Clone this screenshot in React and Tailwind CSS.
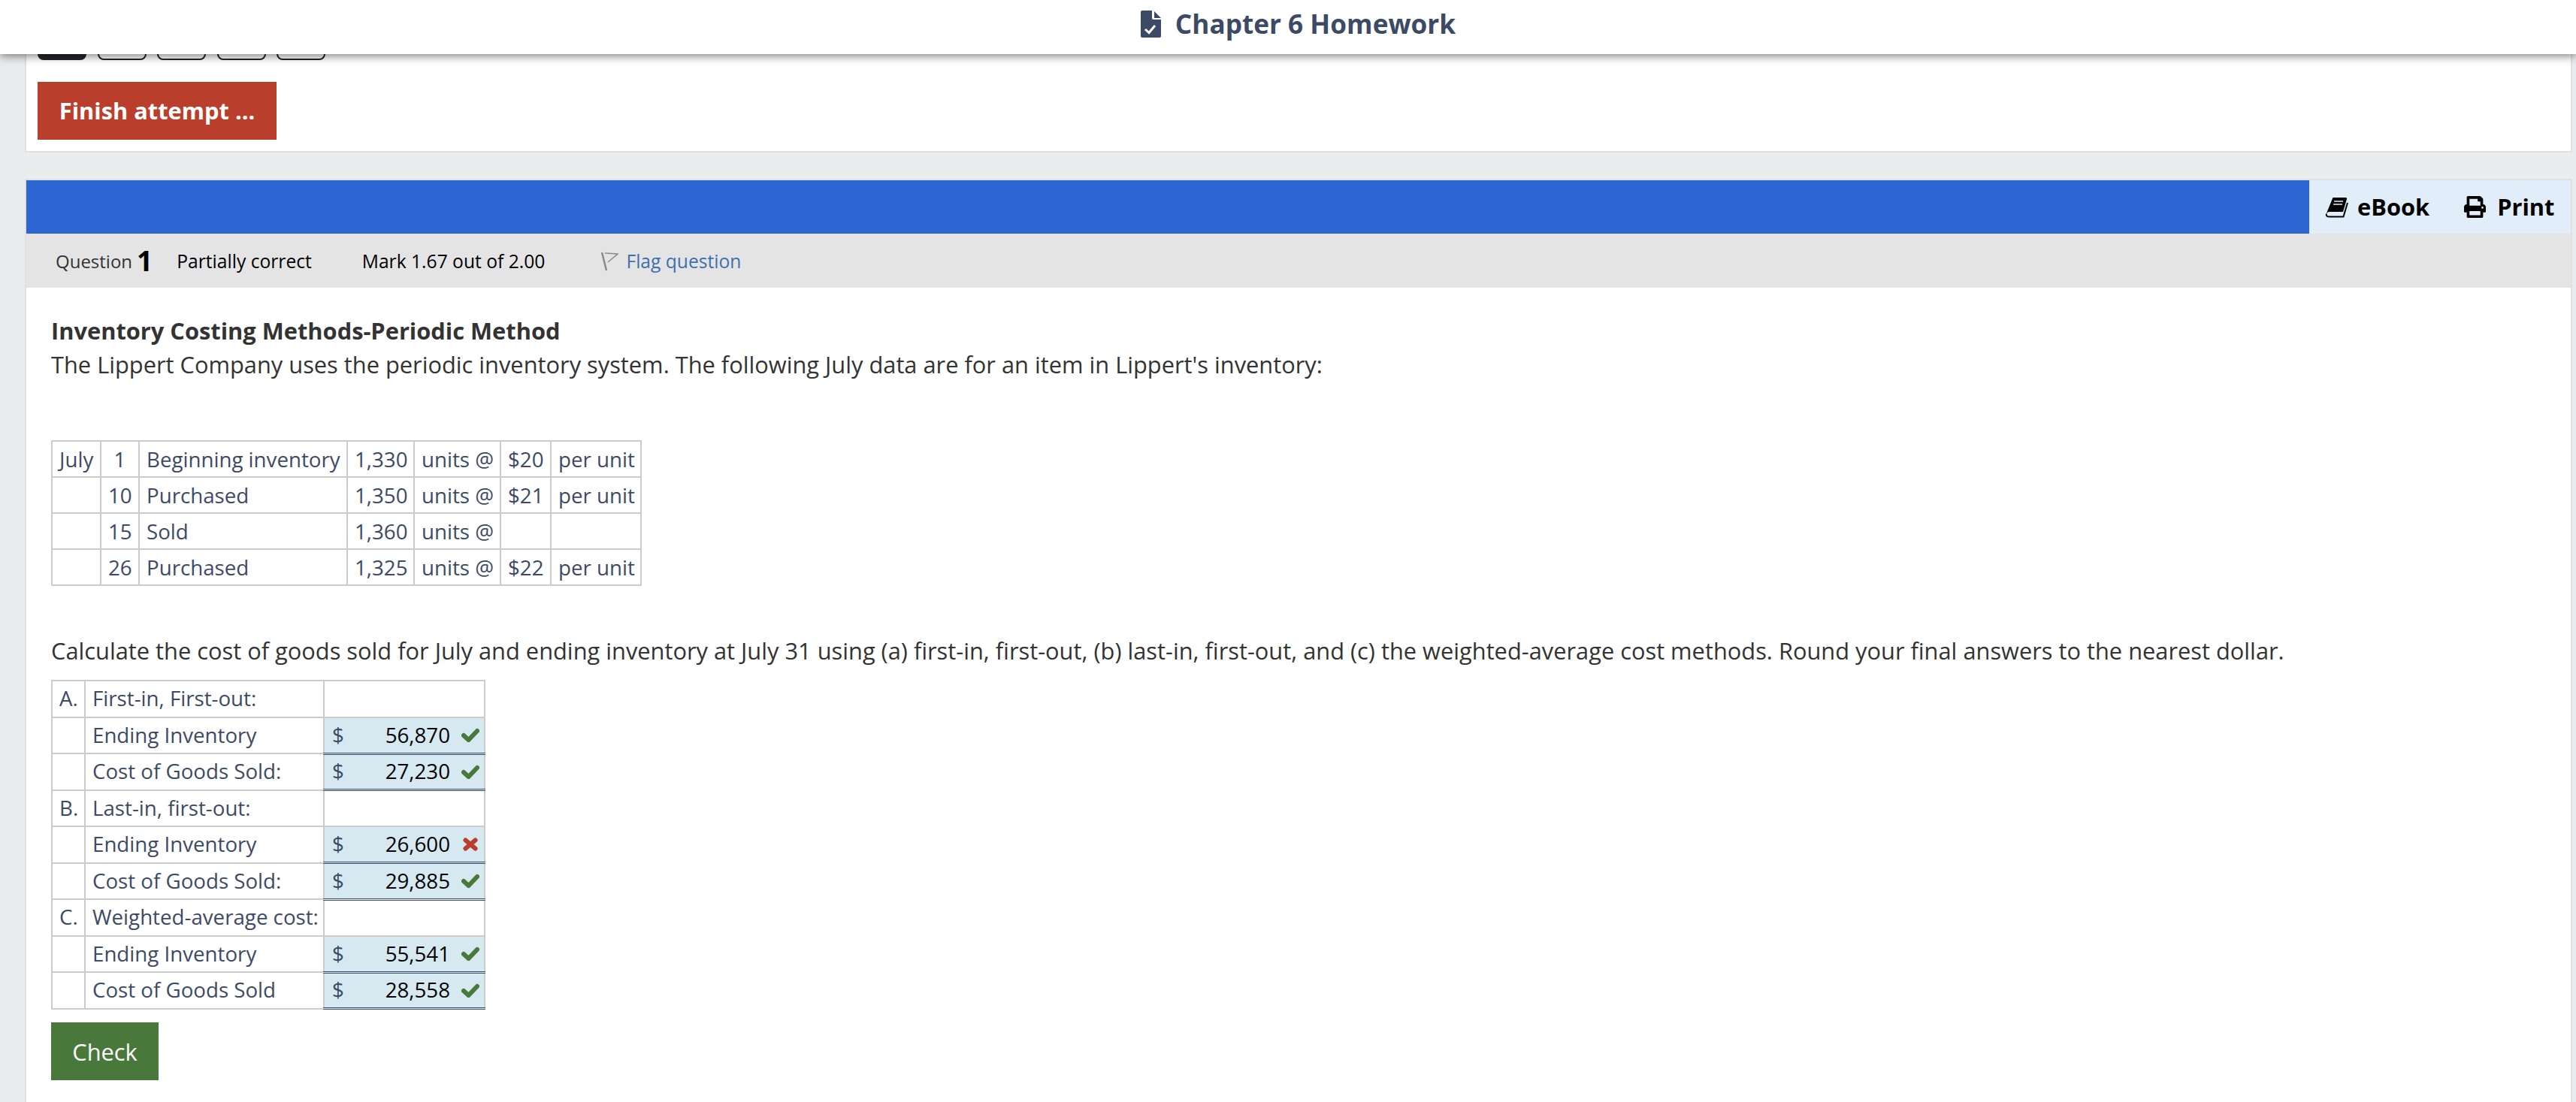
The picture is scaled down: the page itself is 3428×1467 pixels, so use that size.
import React from 'react';
import { FaPrint } from 'react-icons/fa';

const inventoryRows = [
  { month: 'July', day: '1', label: 'Beginning inventory', qty: '1,330', price: '$20', per: 'per unit' },
  { month: '', day: '10', label: 'Purchased', qty: '1,350', price: '$21', per: 'per unit' },
  { month: '', day: '15', label: 'Sold', qty: '1,360', price: '', per: '' },
  { month: '', day: '26', label: 'Purchased', qty: '1,325', price: '$22', per: 'per unit' },
];

const answerRows = [
  { key: 'A.', label: 'First-in, First-out:' },
  { label: 'Ending Inventory', value: '56,870', ok: true },
  { label: 'Cost of Goods Sold:', value: '27,230', ok: true },
  { key: 'B.', label: 'Last-in, first-out:' },
  { label: 'Ending Inventory', value: '26,600', ok: false },
  { label: 'Cost of Goods Sold:', value: '29,885', ok: true },
  { key: 'C.', label: 'Weighted-average cost:' },
  { label: 'Ending Inventory', value: '55,541', ok: true },
  { label: 'Cost of Goods Sold', value: '28,558', ok: true },
];

const FileCheckIcon = () => (
  <svg width="27" height="36" viewBox="0 0 27 36" className="shrink-0">
    <path d="M2 0H15V10a2 2 0 0 0 2 2H27V34a2 2 0 0 1-2 2H2a2 2 0 0 1-2-2V2a2 2 0 0 1 2-2z" fill="#3d4a66" />
    <path d="M18 1L27 10H18z" fill="#3d4a66" />
    <path d="M6 25L11 29.500L19 20" fill="none" stroke="#fff" strokeWidth="3" />
  </svg>
);

const BookIcon = () => (
  <svg width="32" height="28" viewBox="4 6 32 28" className="shrink-0">
    <path d="M14.500 7H31.500a1.500 1.500 0 0 1 1.500 2L28 26H10c-2 0-3.500 1-4.500 3z" fill="#000" />
    <path d="M6 28.500c-1 2.500.5 4 3 4H28.500L34 14" fill="none" stroke="#000" strokeWidth="2" />
    <path d="M16 12H28M15 16H27" fill="none" stroke="#e1eefa" strokeWidth="1.500" />
  </svg>
);

const FlagIcon = () => (
  <svg width="24" height="26" viewBox="7 7 24 26" className="shrink-0">
    <path d="M9 8L15 32" fill="none" stroke="#8a8a8a" strokeWidth="2.500" />
    <path d="M13 9L30 10L17 21" fill="none" stroke="#8a8a8a" strokeWidth="1.500" />
  </svg>
);

const CheckMark = () => (
  <svg width="24" height="19" viewBox="0 0 24 19" className="ml-[15px] shrink-0">
    <path d="M3 10L9.500 16L21 4" fill="none" stroke="#48793b" strokeWidth="6" strokeLinecap="round" />
  </svg>
);

const CrossMark = () => (
  <svg width="24" height="18" viewBox="0 0 24 18" className="ml-[15px] shrink-0">
    <path d="M5.500 3.500L18.500 14.500M18.500 3.500L5.500 14.500" fill="none" stroke="#b93e2b" strokeWidth="6" strokeLinecap="round" />
  </svg>
);

const App = () => {
  const cell = 'border-2 border-[#ccc] px-[9px] py-0 font-normal text-left align-middle whitespace-nowrap';

  return (
    <div className="flex h-[1467px] flex-col overflow-hidden bg-[#ebecee] font-['Open_Sans',sans-serif] text-[#3d4a66]">
      <header className="relative z-10 flex h-[72px] shrink-0 items-center justify-center gap-[19px] bg-white pb-[9px] pl-[27px] shadow-[0_2px_12px_rgba(0,0,0,0.55)]">
        <FileCheckIcon />
        <span className="text-[35.2px] font-bold">Chapter 6 Homework</span>
      </header>

      <div className="ml-[33px] mr-[5px] border-2 border-t-0 border-[#dee0e2] bg-white px-[15px] pb-[15px]">
        <div className="flex h-[8px] items-end gap-[14.5px] overflow-hidden">
          {[0, 1, 2, 3, 4].map((n) => (
            <div
              key={n}
              className={`h-[30px] w-[65px] shrink-0 rounded-[8px] border-2 border-[#23262b] ${n === 0 ? 'bg-[#23262b]' : 'bg-white'}`}
            />
          ))}
        </div>
        <button className="mt-[29px] flex h-[77px] w-[318px] items-center justify-center bg-[#b93e2b] text-[30.8px] font-bold text-white">
          Finish attempt ...
        </button>
      </div>

      <div className="ml-[33px] mr-[5px] mt-[35px] flex-1 border-2 border-b-0 border-[#dee0e2] bg-white">
        <div className="flex h-[71px] bg-[#2d66d3]">
          <div className="ml-auto flex w-[348px] items-center bg-[#e1eefa] pl-[21px] text-[30.8px] font-bold text-black">
            <BookIcon />
            <span className="ml-[11px]">eBook</span>
            <FaPrint size={29} className="ml-[46px] shrink-0" />
            <span className="ml-[15px]">Print</span>
          </div>
        </div>

        <div className="flex h-[72px] items-center bg-[#e4e4e5] pl-[39px] pt-[2px] text-[24.64px] text-black">
          <span className="text-[24px] text-[#333]">Question</span>
          <span className="mb-[4px] ml-[6px] text-[37px] font-bold leading-none">1</span>
          <span className="ml-[32px]">Partially correct</span>
          <span className="ml-[67px]">Mark 1.67 out of 2.00</span>
          <span className="ml-[74px] flex items-center gap-[10px] text-[#3f70ad]">
            <FlagIcon />
            Flag question
          </span>
        </div>

        <div className="px-[33px] pt-[34px] text-[30.8px] leading-[46px]">
          <div className="font-bold text-[#333]">Inventory Costing Methods-Periodic Method</div>
          <div className="-mt-[1px] text-[#333]">
            The Lippert Company uses the periodic inventory system. The following July data are for an item in Lippert's inventory:
          </div>

          <table className="mt-[78px] w-[784px] table-fixed border-collapse text-[27.7px] leading-none">
            <colgroup>
              <col className="w-[65px]" />
              <col className="w-[51px]" />
              <col className="w-[277px]" />
              <col className="w-[89px]" />
              <col className="w-[115px]" />
              <col className="w-[67px]" />
              <col className="w-[120px]" />
            </colgroup>
            <tbody>
              {inventoryRows.map((row) => (
                <tr key={row.day} className="h-[48px]">
                  <td className={`${cell} pt-[2px]`}>{row.month}</td>
                  <td className={`${cell} pt-[2px] !text-center`}>{row.day}</td>
                  <td className={`${cell} pt-[2px]`}>{row.label}</td>
                  <td className={`${cell} pt-[2px]`}>{row.qty}</td>
                  <td className={`${cell} pt-[2px]`}>units @</td>
                  <td className={`${cell} pt-[2px]`}>{row.price}</td>
                  <td className={`${cell} pt-[2px]`}>{row.per}</td>
                </tr>
              ))}
            </tbody>
          </table>

          <div className="mt-[63px] text-[#333]">
            Calculate the cost of goods sold for July and ending inventory at July 31 using (a) first-in, first-out, (b) last-in, first-out, and (c) the weighted-average cost methods. Round your final answers to the nearest dollar.
          </div>

          <table className="mt-[16px] w-[576px] table-fixed border-collapse text-[27.7px] leading-none">
            <colgroup>
              <col className="w-[44px]" />
              <col className="w-[318px]" />
              <col className="w-[214px]" />
            </colgroup>
            <tbody>
              {answerRows.map((row, i) => (
                <tr key={i} className="h-[48.5px]">
                  <td className={cell}>{row.key}</td>
                  <td className={cell}>{row.label}</td>
                  {row.value ? (
                    <td className="border-2 border-b-[3px] border-[#ccc] border-b-[#3d4a66] border-double bg-[#d6e8f0] p-0">
                      <div className="flex items-center pl-[10px] pr-[6px]">
                        <span>$</span>
                        <span className="ml-auto text-black">{row.value}</span>
                        {row.ok ? <CheckMark /> : <CrossMark />}
                      </div>
                    </td>
                  ) : (
                    <td className={cell} />
                  )}
                </tr>
              ))}
            </tbody>
          </table>

          <button className="mt-[17px] flex h-[77px] w-[143px] items-center justify-center bg-[#48793b] text-[30.8px] text-white">
            Check
          </button>
        </div>
      </div>
    </div>
  );
};

export default App;
